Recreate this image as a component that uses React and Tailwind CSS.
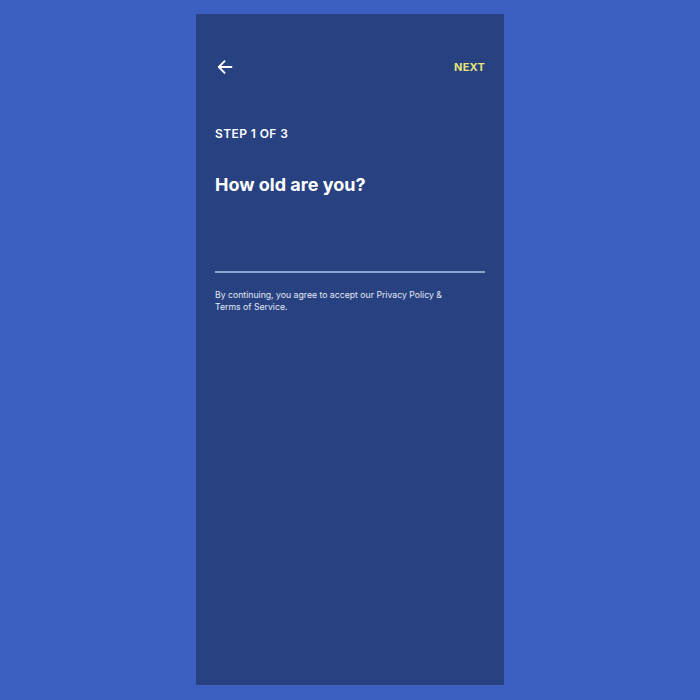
import React from "react";

const ArrowLeft = () => (
  <svg width="16" height="16" viewBox="0 0 16 16" fill="none" stroke="white" strokeWidth="1.8" strokeLinecap="round" strokeLinejoin="round">
    <path d="M14.5 8H1.8" />
    <path d="M7.6 2.2L1.8 8l5.8 5.8" />
  </svg>
);

export default function App() {
  return (
    <div
      className="w-[700px] h-[700px] bg-[#3b5fc0] flex justify-center pt-[14px]"
      style={{ fontFamily: "Inter, 'Open Sans', sans-serif" }}
    >
      <div className="w-[308px] h-[671px] bg-[#284281] flex flex-col px-[19px]">
        {/* header */}
        <div className="flex items-center justify-between mt-[45px] h-[16px]">
          <button className="ml-[2px]">
            <ArrowLeft />
          </button>
          <span className="text-[11px] font-bold text-[#e6e27a] tracking-[0.2px]">NEXT</span>
        </div>

        <div className="mt-[51px] text-[12px] font-semibold text-white tracking-[0.4px] leading-[16px]">
          STEP 1 OF 3
        </div>

        <h1 className="mt-[31px] text-[18px] font-bold text-white leading-[24px]">
          How old are you?
        </h1>

        <div className="mt-[74px] h-[2px] bg-[#8ea3cc]" />

        <p className="mt-[16px] text-[8.7px] text-[#e3e8f5] leading-[12px] w-[250px]">
          By continuing, you agree to accept our Privacy Policy &amp; Terms of Service.
        </p>
      </div>
    </div>
  );
}
